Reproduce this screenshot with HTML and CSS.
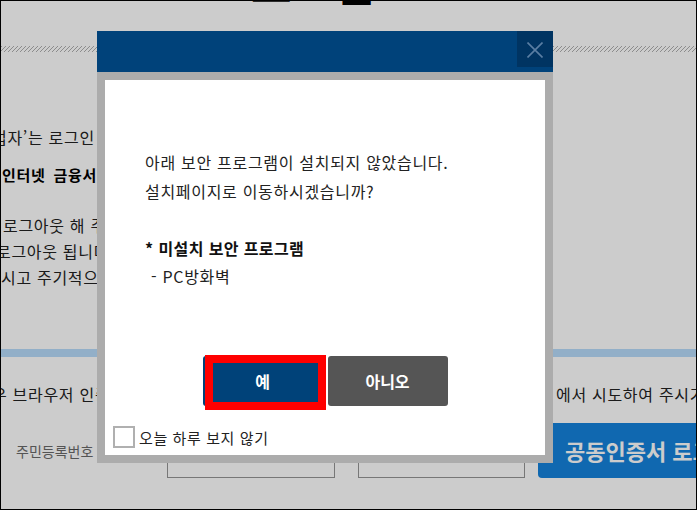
FILE: index.html
```html
<!DOCTYPE html>
<html lang="ko">
<head>
<meta charset="utf-8">
<title>보안 프로그램 설치 안내</title>
<link rel="stylesheet" href="styles.css">
</head>
<body>
<div class="screen">
  <div class="page">
    <h1 class="title">로그인</h1>
    <div class="hatch"></div>
    <div class="notice">
      <p class="l1">업자’는 로그인 후 이용하실 수 있습니다.</p>
      <p class="l2">인터넷 금융서비스 이용 안내</p>
      <div class="group">
        <p class="l3">로그아웃 해 주시기 바랍니다.</p>
        <p class="l4">로그아웃 됩니다.</p>
        <p class="l5">시고 주기적으로 변경하여 주시기 바랍니다.</p>
      </div>
    </div>
    <div class="bar"></div>
    <div class="browser-line">
      <span class="bl-left">우 브라우저 인증서 로그인이 되지 않으면</span>
      <span class="bl-right">에서 시도하여 주시기 바랍니다.</span>
    </div>
    <div class="form-row">
      <label class="form-label">주민등록번호</label>
      <div class="input input-a"></div>
      <div class="input input-b"></div>
      <div class="cert-btn">공동인증서 로그인</div>
    </div>
  </div>

  <div class="backdrop"></div>

  <div class="modal">
    <div class="modal-head">
      <button class="close" aria-label="닫기">
        <svg width="16" height="16" viewBox="0 0 16 16"><path d="M0.5 0.5 L15.5 15.5 M15.5 0.5 L0.5 15.5" stroke="#5a7ea3" stroke-width="1.6" fill="none"/></svg>
      </button>
    </div>
    <div class="modal-frame">
      <div class="modal-body">
        <div class="message">
          <p>아래 보안 프로그램이 설치되지 않았습니다.</p>
          <p>설치페이지로 이동하시겠습니까?</p>
          <p>&nbsp;</p>
          <p class="strong">* 미설치 보안 프로그램</p>
          <p class="item">- PC방화벽</p>
        </div>
        <div class="actions">
          <div class="btn-wrap">
            <button class="btn btn-yes">예</button>
            <span class="highlight"></span>
          </div>
          <button class="btn btn-no">아니오</button>
        </div>
        <label class="today">
          <span class="checkbox"></span>
          <span class="today-text">오늘 하루 보지 않기</span>
        </label>
      </div>
    </div>
  </div>
</div>
</body>
</html>
```

FILE: styles.css
```css
* { box-sizing: border-box; }
html, body { margin: 0; padding: 0; }
body {
  font-family: "Noto Sans CJK KR", "Noto Sans", sans-serif;
  background: #fff;
}
p { margin: 0; }

.screen {
  width: 697px;
  height: 510px;
  border: 1px solid #000;
  position: relative;
  overflow: hidden;
  background: #fff;
  color: #222;
}

.page { width: 100%; }

.title {
  margin: -40px 0 0 0;
  padding-left: 250px;
  font-size: 44px;
  line-height: 44px;
  font-weight: 700;
  color: #000;
  letter-spacing: 1px;
}

.hatch {
  margin-top: 41px;
  height: 6px;
  background: repeating-linear-gradient(135deg, #b0b0b0 0 1px, transparent 1px 2.83px);
}

.notice {
  margin-left: -21px;
  padding-top: 73px;
  letter-spacing: 0.7px;
}
.notice .l1 {
  font-size: 16px;
  line-height: 25px;
  padding-left: 12px;
}
.notice .l2 {
  margin-top: 12px;
  font-size: 15px;
  line-height: 25px;
  font-weight: 700;
  padding-left: 22px;
  color: #000;
  word-spacing: 3px;
}
.notice .group {
  margin-top: 25px;
  font-size: 16px;
  line-height: 26px;
}
.notice .l3 { padding-left: 23px; }
.notice .l4 { padding-left: 16px; }
.notice .l5 { padding-left: 21px; }

.bar {
  margin-top: 59px;
  height: 8px;
  background: #b7dbfa;
}

.browser-line {
  margin-left: -21px;
  margin-top: 25px;
  display: grid;
  grid-template-columns: 576px auto;
  font-size: 16px;
  line-height: 24px;
  white-space: nowrap;
  letter-spacing: 0.7px;
}
.bl-left { padding-left: 12px; overflow: hidden; }

.form-row {
  margin-top: 17px;
  margin-left: -20px;
  display: flex;
  align-items: center;
  height: 55px;
  white-space: nowrap;
}
.form-label {
  flex: 0 0 186px;
  padding-left: 35px;
  font-size: 14px;
  color: #6a6a6a;
}
.input {
  height: 55px;
  border: 1px solid #959595;
  background: #fff;
}
.input-a { flex: 0 0 168px; }
.input-b { flex: 0 0 167px; margin-left: 23px; }
.cert-btn {
  flex: 0 0 220px;
  margin-left: 13px;
  height: 55px;
  background: #1483dc;
  border-radius: 4px 0 0 4px;
  color: #fff;
  font-size: 22px;
  font-weight: 700;
  line-height: 55px;
  padding-left: 27px;
}

.backdrop {
  position: absolute;
  inset: 0;
  background: rgba(0, 0, 0, 0.2);
}

.modal {
  position: absolute;
  left: 96px;
  top: 30px;
  width: 456px;
}
.modal-head {
  height: 41px;
  background: #00427a;
  display: flex;
  justify-content: flex-end;
  align-items: flex-start;
}
.close {
  width: 36px;
  height: 36px;
  border: 0;
  padding: 0;
  margin: 0;
  background: #003462;
  display: flex;
  align-items: center;
  justify-content: center;
  cursor: pointer;
}
.close svg { display: block; margin-top: 1px; }

.modal-frame {
  background: #acacac;
  padding: 8px;
}
.modal-body {
  height: 375px;
  background: #fff;
  display: flex;
  flex-direction: column;
  padding-top: 68px;
}
.message {
  padding-left: 40px;
  font-size: 16px;
  line-height: 28.5px;
  letter-spacing: 0.7px;
  color: #222;
}
.message .strong { font-weight: 700; color: #111; letter-spacing: 0.4px; }
.message .item { padding-left: 6px; }

.actions {
  margin-top: 65.5px;
  display: flex;
  justify-content: center;
  gap: 5px;
}
.btn-wrap { position: relative; }
.btn {
  width: 120px;
  height: 50px;
  border: 0;
  border-radius: 3px;
  color: #fff;
  font-family: inherit;
  font-size: 16px;
  font-weight: 700;
  display: block;
  cursor: pointer;
}
.btn-yes { background: #004279; }
.btn-no { background: #555; }
.highlight {
  position: absolute;
  left: 2px;
  top: -1px;
  width: 121px;
  height: 55px;
  border: 8px solid #ff0000;
  pointer-events: none;
}

.today {
  margin-top: 20px;
  padding-left: 8px;
  display: flex;
  align-items: center;
  height: 22px;
}
.checkbox {
  width: 22px;
  height: 22px;
  border: 2px solid #b0b0b0;
  background: #fff;
}
.today-text {
  margin-left: 4px;
  font-size: 15px;
  color: #222;
  letter-spacing: 0.6px;
}
```
